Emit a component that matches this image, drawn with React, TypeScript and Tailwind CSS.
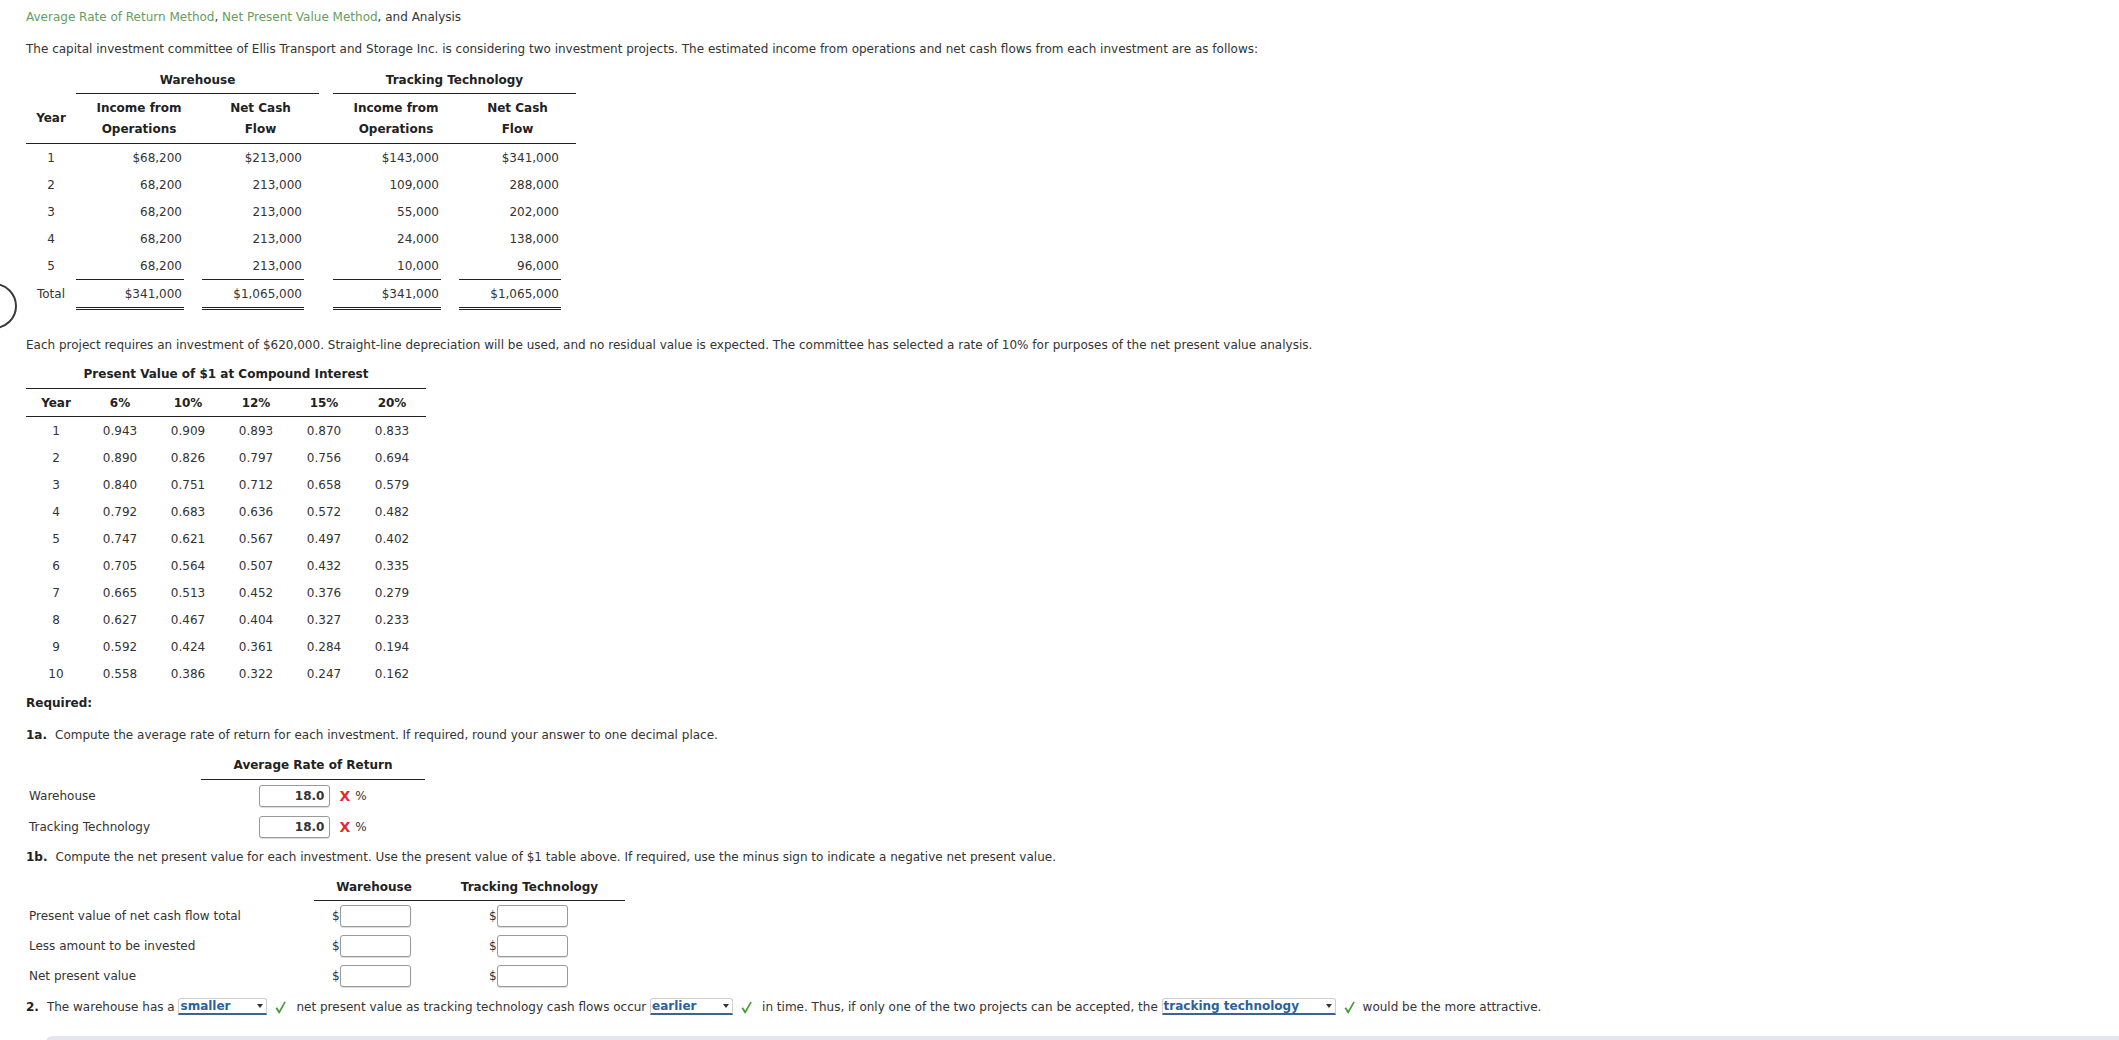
import React from 'react';

const cashRows = [
  ['1', '$68,200', '$213,000', '$143,000', '$341,000'],
  ['2', '68,200', '213,000', '109,000', '288,000'],
  ['3', '68,200', '213,000', '55,000', '202,000'],
  ['4', '68,200', '213,000', '24,000', '138,000'],
  ['5', '68,200', '213,000', '10,000', '96,000'],
];

const pvRows = [
  ['1', '0.943', '0.909', '0.893', '0.870', '0.833'],
  ['2', '0.890', '0.826', '0.797', '0.756', '0.694'],
  ['3', '0.840', '0.751', '0.712', '0.658', '0.579'],
  ['4', '0.792', '0.683', '0.636', '0.572', '0.482'],
  ['5', '0.747', '0.621', '0.567', '0.497', '0.402'],
  ['6', '0.705', '0.564', '0.507', '0.432', '0.335'],
  ['7', '0.665', '0.513', '0.452', '0.376', '0.279'],
  ['8', '0.627', '0.467', '0.404', '0.327', '0.233'],
  ['9', '0.592', '0.424', '0.361', '0.284', '0.194'],
  ['10', '0.558', '0.386', '0.322', '0.247', '0.162'],
];

// one money cell: outer width includes the gap after the underline
function Money({ value, outer, inner, line }: { value: string; outer: string; inner: string; line?: 'single' | 'double' }) {
  let border = '';
  if (line === 'single') border = 'border-b border-[#222]';
  if (line === 'double') border = 'border-b-[3px] border-double border-[#222]';
  return (
    <div className={`${outer} h-full`}>
      <div className={`${inner} h-full flex items-center justify-end pr-[2px] ${border}`}>{value}</div>
    </div>
  );
}

function CashRow({ cells, line, h }: { cells: string[]; line?: 'single' | 'double'; h: string }) {
  return (
    <div className={`flex ${h}`}>
      <div className={`w-[50px] flex items-center justify-center ${line === 'double' ? 'pb-[3px]' : line === 'single' ? 'pb-[1px]' : ''}`}>{cells[0]}</div>
      <Money value={cells[1]} outer="w-[126px]" inner="w-[108px]" line={line} />
      <Money value={cells[2]} outer="w-[117px]" inner="w-[102px]" line={line} />
      <div className="w-[14px]" />
      <Money value={cells[3]} outer="w-[126px]" inner="w-[108px]" line={line} />
      <Money value={cells[4]} outer="w-[117px]" inner="w-[102px]" line={line} />
    </div>
  );
}

function Box({ value }: { value?: string }) {
  return (
    <div className="w-[71px] h-[22px] border border-[#9a9a9a] rounded-[3px] shadow-[0_1px_1px_rgba(0,0,0,0.15)] bg-white flex items-center justify-end pr-[5px] font-bold">
      {value}
    </div>
  );
}

function Check() {
  return (
    <svg width="11" height="13" viewBox="0 0 11 13" className="inline-block align-middle">
      <path d="M0.5 7.2 L2 6.2 L4.2 9.6 L9.4 0.4 L10.8 1.2 L4.6 12.4 L3.8 12.4 Z" fill="#4b9c3c" />
    </svg>
  );
}

function Pick({ text, w }: { text: string; w: string }) {
  return (
    <span className={`relative inline-block align-middle ${w} h-[17px] border border-[#cfcfcf] border-b-2 border-b-[#3a6494] rounded-t-[3px] bg-white font-bold text-[#2d5f9c] leading-[14px] pl-[1px] -mt-[3px]`}>
      {text}
      <svg width="6" height="4" viewBox="0 0 6 4" className="absolute right-[3px] top-[5px]">
        <path d="M0 0 L6 0 L3 4 Z" fill="#333" />
      </svg>
    </span>
  );
}

export default function App() {
  return (
    <div className="relative min-h-screen overflow-hidden bg-white font-['DejaVu_Sans',Verdana,sans-serif] text-[12px] leading-[18px] text-[#333] pl-[26px] pt-[8px]">
      <div className="absolute left-[-29px] top-[283px] w-[46px] h-[46px] rounded-full border-[2.5px] border-[#3a3a3a]" />

      <div>
        <span className="text-[#63a05c]">Average Rate of Return Method</span>,{' '}
        <span className="text-[#63a05c]">Net Present Value Method</span>, and Analysis
      </div>

      <p className="mt-[14px]">
        The capital investment committee of Ellis Transport and Storage Inc. is considering two investment projects. The estimated income from operations and net cash flows from each investment are as follows:
      </p>

      {/* cash flow table */}
      <div className="mt-[10px] w-[550px]">
        <div className="flex h-[26px] font-bold text-[#222]">
          <div className="w-[50px]" />
          <div className="w-[243px] border-b border-[#222] flex items-center justify-center pb-[2px]">Warehouse</div>
          <div className="w-[14px]" />
          <div className="w-[243px] border-b border-[#222] flex items-center justify-center pb-[2px]">Tracking Technology</div>
        </div>
        <div className="flex h-[50px] border-b border-[#222] font-bold text-[#222] leading-[21px]">
          <div className="w-[50px] flex items-center justify-center">Year</div>
          <div className="w-[126px] flex flex-col items-center justify-center"><span>Income from</span><span>Operations</span></div>
          <div className="w-[117px] flex flex-col items-center justify-center"><span>Net Cash</span><span>Flow</span></div>
          <div className="w-[14px]" />
          <div className="w-[126px] flex flex-col items-center justify-center"><span>Income from</span><span>Operations</span></div>
          <div className="w-[117px] flex flex-col items-center justify-center"><span>Net Cash</span><span>Flow</span></div>
        </div>
        {cashRows.map((r, i) => (
          <CashRow key={r[0]} cells={r} line={i === 4 ? 'single' : undefined} h={i === 4 ? 'h-[28px]' : 'h-[27px]'} />
        ))}
        <CashRow cells={['Total', '$341,000', '$1,065,000', '$341,000', '$1,065,000']} line="double" h="h-[30px]" />
      </div>

      <p className="mt-[26px]">
        Each project requires an investment of $620,000. Straight-line depreciation will be used, and no residual value is expected. The committee has selected a rate of 10% for purposes of the net present value analysis.
      </p>

      {/* present value table */}
      <div className="mt-[6px] w-[400px]">
        <div className="h-[29px] border-b border-[#222] flex items-center justify-center font-bold text-[#222]">
          Present Value of $1 at Compound Interest
        </div>
        <div className="flex h-[28px] border-b border-[#222] font-bold text-[#222]">
          <div className="w-[60px] flex items-center justify-center">Year</div>
          {['6%', '10%', '12%', '15%', '20%'].map((p) => (
            <div key={p} className="w-[68px] flex items-center justify-center">{p}</div>
          ))}
        </div>
        {pvRows.map((r) => (
          <div key={r[0]} className="flex h-[27px]">
            <div className="w-[60px] flex items-center justify-center">{r[0]}</div>
            {r.slice(1).map((v, j) => (
              <div key={j} className="w-[68px] flex items-center justify-center">{v}</div>
            ))}
          </div>
        ))}
      </div>

      <div className="mt-[7px] font-bold text-[#222]">Required:</div>

      <p className="mt-[14px]">
        <span className="font-bold text-[#222] mr-[8px]">1a.</span>Compute the average rate of return for each investment. If required, round your answer to one decimal place.
      </p>

      <div className="mt-[7px] w-[399px]">
        <div className="flex h-[29px]">
          <div className="w-[175px]" />
          <div className="w-[224px] border-b border-[#222] flex items-center justify-center font-bold text-[#222]">Average Rate of Return</div>
        </div>
        {['Warehouse', 'Tracking Technology'].map((label) => (
          <div key={label} className="flex h-[31px]">
            <div className="w-[175px] pl-[3px] flex items-center">{label}</div>
            <div className="w-[224px] flex items-center justify-center">
              <Box value="18.0" />
              <span className="ml-[9px] font-bold text-[14px] text-[#e5282c]">X</span>
              <span className="ml-[5px]">%</span>
            </div>
          </div>
        ))}
      </div>

      <p className="mt-[6px]">
        <span className="font-bold text-[#222] mr-[8px]">1b.</span>Compute the net present value for each investment. Use the present value of $1 table above. If required, use the minus sign to indicate a negative net present value.
      </p>

      <div className="mt-[7px] w-[599px]">
        <div className="flex h-[28px]">
          <div className="w-[288px]" />
          <div className="flex border-b border-[#222] font-bold text-[#222]">
            <div className="w-[120px] flex items-center justify-center">Warehouse</div>
            <div className="w-[191px] flex items-center justify-center">Tracking Technology</div>
          </div>
        </div>
        {['Present value of net cash flow total', 'Less amount to be invested', 'Net present value'].map((label) => (
          <div key={label} className="flex h-[30px]">
            <div className="w-[288px] pl-[3px] flex items-center">{label}</div>
            <div className="w-[120px] flex items-center pl-[18px]">
              <span>$</span>
              <Box />
            </div>
            <div className="w-[191px] flex items-center pl-[55px]">
              <span>$</span>
              <Box />
            </div>
          </div>
        ))}
      </div>

      <p className="mt-[7px] whitespace-nowrap">
        <span className="font-bold text-[#222] mr-[8px]">2.</span>The warehouse has a <Pick text="smaller" w="w-[89px]" />
        <span className="ml-[8px] mr-[10px]"><Check /></span>
        net present value as tracking technology cash flows occur <Pick text="earlier" w="w-[83px]" />
        <span className="ml-[8px] mr-[10px]"><Check /></span>
        in time. Thus, if only one of the two projects can be accepted, the <Pick text="tracking technology" w="w-[174px]" />
        <span className="ml-[8px] mr-[8px]"><Check /></span>
        would be the more attractive.
      </p>

      <div className="mt-[20px] ml-[20px] h-[40px] bg-[#e3e7eb] rounded-tl-[6px]" />
    </div>
  );
}
